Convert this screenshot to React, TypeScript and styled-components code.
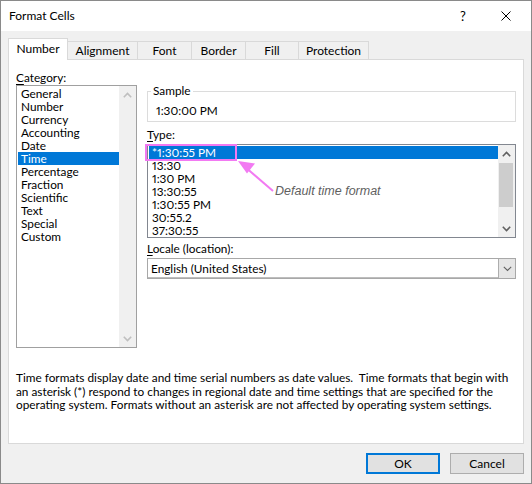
import React from "react";
import styled, { createGlobalStyle, css } from "styled-components";

const UI_FONT = `"Lato", "Noto Sans", sans-serif`;

const Global = createGlobalStyle`
  html, body { margin: 0; padding: 0; background: #ffffff; }
  body {
    font-family: ${UI_FONT};
    font-size: 11.8px;
    color: #000;
    font-variant-numeric: proportional-nums;
    font-feature-settings: "pnum" 1;
  }
  * { box-sizing: border-box; }
`;

const Window = styled.div`
  width: 532px;
  height: 484px;
  border: 1px solid #8a8a8a;
  background: #f0f0f0;
  display: flex;
  flex-direction: column;
  overflow: hidden;
`;

const TitleBar = styled.div`
  height: 30px;
  flex: none;
  background: #ffffff;
  display: flex;
  align-items: center;
  padding-left: 8px;
`;

const Title = styled.div`
  flex: 1;
  font-size: 12px;
  line-height: 16px;
  color: #000;
`;

const TitleButton = styled.div<{ $w: number }>`
  width: ${(p) => p.$w}px;
  height: 30px;
  display: flex;
  align-items: center;
  justify-content: center;
  font-size: 13px;
  color: #000;
`;

const Body = styled.div`
  flex: 1;
  display: flex;
  flex-direction: column;
  padding: 7px 7px 0 7px;
`;

const TabStrip = styled.div`
  display: flex;
  align-items: flex-end;
  height: 22px;
  margin-bottom: -1px;
  position: relative;
  z-index: 1;
`;

const Tab = styled.div<{ $active?: boolean; $w: number }>`
  width: ${(p) => p.$w}px;
  display: flex;
  align-items: center;
  justify-content: center;
  border: 1px solid #d9d9d9;
  border-bottom: none;
  margin-right: -1px;
  font-size: 12px;
  color: #000;
  ${(p) =>
    p.$active
      ? css`
          height: 22px;
          background: #ffffff;
          padding-bottom: 2px;
          position: relative;
          z-index: 2;
        `
      : css`
          height: 18px;
          margin-bottom: 1px;
          background: #f0f0f0;
        `}
`;

const Panel = styled.div`
  height: 385px;
  flex: none;
  background: #ffffff;
  border: 1px solid #d9d9d9;
  display: flex;
  flex-direction: column;
  padding: 11px 6px 0 7px;
`;

const Columns = styled.div`
  display: flex;
  gap: 10px;
`;

const CategoryCol = styled.div`
  width: 121px;
  display: flex;
  flex-direction: column;
`;

const RightCol = styled.div`
  width: 369px;
  display: flex;
  flex-direction: column;
`;

const FieldLabel = styled.div<{ $mt?: number; $mb?: number }>`
  line-height: 14px;
  height: 14px;
  margin-top: ${(p) => p.$mt ?? 0}px;
  margin-bottom: ${(p) => p.$mb ?? 0}px;
  white-space: nowrap;
`;

const Mnemonic = styled.span`
  text-decoration: underline;
  text-underline-offset: 2px;
`;

const ListBox = styled.div<{ $h: number; $border: string }>`
  height: ${(p) => p.$h}px;
  border: 1px solid ${(p) => p.$border};
  background: #ffffff;
  display: flex;
`;

const ListItems = styled.div`
  flex: 1;
  padding: 1px 0 0 1px;
  display: flex;
  flex-direction: column;
  overflow: hidden;
`;

const ListItem = styled.div<{ $selected?: boolean }>`
  height: 13px;
  line-height: 13px;
  padding-left: 3px;
  white-space: nowrap;
  ${(p) =>
    p.$selected &&
    css`
      background: #0078d7;
      color: #ffffff;
    `}
`;

const ScrollBar = styled.div`
  width: 17px;
  flex: none;
  background: #f0f0f0;
  display: flex;
  flex-direction: column;
`;

const ScrollArrow = styled.div`
  height: 17px;
  flex: none;
  display: flex;
  align-items: center;
  justify-content: center;
`;

const ScrollTrack = styled.div`
  flex: 1;
  padding: 1px 2px 0 1px;
`;

const ScrollThumb = styled.div`
  height: 44px;
  background: #cdcdcd;
`;

const SampleGroup = styled.fieldset`
  margin: 13px 0 0 0;
  padding: 6px 0 3px 8px;
  border: 1px solid #dcdcdc;
  min-width: 0;
`;

const SampleLegend = styled.legend`
  margin-left: -5px;
  padding: 0 2px;
  line-height: 14px;
`;

const SampleValue = styled.div`
  line-height: 14px;
`;

const TypeWrap = styled.div`
  position: relative;
`;

const Highlight = styled.div`
  position: absolute;
  left: -2px;
  top: 0;
  width: 92px;
  height: 17px;
  border: 2px solid #f27af2;
  pointer-events: none;
`;

const ArrowSvg = styled.svg`
  position: absolute;
  left: 0;
  top: 0;
  overflow: visible;
  pointer-events: none;
`;

const Callout = styled.div`
  position: absolute;
  left: 128px;
  top: 40px;
  font-family: "Liberation Sans", Arial, sans-serif;
  font-style: italic;
  font-size: 12.5px;
  line-height: 15px;
  color: #5f5f5f;
  white-space: nowrap;
`;

const Select = styled.div`
  margin-top: 2px;
  height: 21px;
  border: 1px solid #a8a8a8;
  box-shadow: inset 0 -1px 0 #bdbdbd;
  background: #ffffff;
  display: flex;
`;

const SelectValue = styled.div`
  flex: 1;
  line-height: 19px;
  padding-left: 3px;
  white-space: nowrap;
`;

const SelectButton = styled.div`
  width: 17px;
  flex: none;
  background: #e5e5e5;
  border-left: 1px solid #adadad;
  display: flex;
  align-items: center;
  justify-content: center;
`;

const Description = styled.div`
  margin-top: 23px;
  line-height: 13.6px;
  white-space: nowrap;
`;

const ButtonRow = styled.div`
  display: flex;
  justify-content: flex-end;
  gap: 10px;
  margin-top: 9px;
`;

const Button = styled.div<{ $default?: boolean }>`
  width: 74px;
  height: 21px;
  display: flex;
  align-items: center;
  justify-content: center;
  background: #e1e1e1;
  border: ${(p) => (p.$default ? "2px solid #0078d7" : "1px solid #adadad")};
  font-size: 12px;
`;

const Chevron = ({ dir, color, bold }: { dir: "up" | "down"; color: string; bold?: boolean }) => (
  <svg width="9" height="6" viewBox="0 0 9 6">
    <path
      d={dir === "up" ? "M0.8 5.2 L4.5 1.5 L8.2 5.2" : "M0.8 0.8 L4.5 4.5 L8.2 0.8"}
      fill="none"
      stroke={color}
      strokeWidth={bold ? 1.6 : 1.1}
    />
  </svg>
);

const categories = [
  "General",
  "Number",
  "Currency",
  "Accounting",
  "Date",
  "Time",
  "Percentage",
  "Fraction",
  "Scientific",
  "Text",
  "Special",
  "Custom",
];

const types = ["*1:30:55 PM", "13:30", "1:30 PM", "13:30:55", "1:30:55 PM", "30:55.2", "37:30:55"];

const tabs: { label: string; w: number }[] = [
  { label: "Number", w: 60 },
  { label: "Alignment", w: 71 },
  { label: "Font", w: 55 },
  { label: "Border", w: 55 },
  { label: "Fill", w: 54 },
  { label: "Protection", w: 71 },
];

export default function App() {
  return (
    <>
      <Global />
      <Window>
        <TitleBar>
          <Title>Format Cells</Title>
          <TitleButton $w={36}>?</TitleButton>
          <TitleButton $w={50}>
            <svg width="10" height="10" viewBox="0 0 10 10">
              <path d="M0.5 0.5 L9.5 9.5 M9.5 0.5 L0.5 9.5" stroke="#000" strokeWidth="1" />
            </svg>
          </TitleButton>
        </TitleBar>
        <Body>
          <TabStrip>
            {tabs.map((t, i) => (
              <Tab key={t.label} $w={t.w} $active={i === 0}>
                {t.label}
              </Tab>
            ))}
          </TabStrip>
          <Panel>
            <Columns>
              <CategoryCol>
                <FieldLabel $mb={0}>
                  <Mnemonic>C</Mnemonic>ategory:
                </FieldLabel>
                <ListBox $h={263} $border="#a0a0a0">
                  <ListItems>
                    {categories.map((c) => (
                      <ListItem key={c} $selected={c === "Time"}>
                        {c}
                      </ListItem>
                    ))}
                  </ListItems>
                  <ScrollBar>
                    <ScrollArrow>
                      <Chevron dir="up" color="#bfbfbf" bold />
                    </ScrollArrow>
                    <ScrollTrack />
                    <ScrollArrow>
                      <Chevron dir="down" color="#bfbfbf" bold />
                    </ScrollArrow>
                  </ScrollBar>
                </ListBox>
              </CategoryCol>
              <RightCol>
                <SampleGroup>
                  <SampleLegend>Sample</SampleLegend>
                  <SampleValue>1:30:00 PM</SampleValue>
                </SampleGroup>
                <FieldLabel $mt={6} $mb={2}>
                  <Mnemonic>T</Mnemonic>ype:
                </FieldLabel>
                <TypeWrap>
                  <ListBox $h={94} $border="#828790">
                    <ListItems>
                      {types.map((t, i) => (
                        <ListItem key={t} $selected={i === 0}>
                          {t}
                        </ListItem>
                      ))}
                    </ListItems>
                    <ScrollBar>
                      <ScrollArrow>
                        <Chevron dir="up" color="#606060" bold />
                      </ScrollArrow>
                      <ScrollTrack>
                        <ScrollThumb />
                      </ScrollTrack>
                      <ScrollArrow>
                        <Chevron dir="down" color="#606060" bold />
                      </ScrollArrow>
                    </ScrollBar>
                  </ListBox>
                  <Highlight />
                  <ArrowSvg width="130" height="50">
                    <line x1="97" y1="22" x2="126" y2="47" stroke="#f27af2" strokeWidth="2" />
                    <polygon points="91,17 108,19.5 100,29.5" fill="#f27af2" />
                  </ArrowSvg>
                  <Callout>Default time format</Callout>
                </TypeWrap>
                <FieldLabel $mt={4} $mb={0}>
                  <Mnemonic>L</Mnemonic>ocale (location):
                </FieldLabel>
                <Select>
                  <SelectValue>English (United States)</SelectValue>
                  <SelectButton>
                    <Chevron dir="down" color="#606060" />
                  </SelectButton>
                </Select>
              </RightCol>
            </Columns>
            <Description>
              Time formats display date and time serial numbers as date values.&nbsp; Time formats that begin with
              <br />
              an asterisk (*) respond to changes in regional date and time settings that are specified for the
              <br />
              operating system. Formats without an asterisk are not affected by operating system settings.
            </Description>
          </Panel>
          <ButtonRow>
            <Button $default>OK</Button>
            <Button>Cancel</Button>
          </ButtonRow>
        </Body>
      </Window>
    </>
  );
}
